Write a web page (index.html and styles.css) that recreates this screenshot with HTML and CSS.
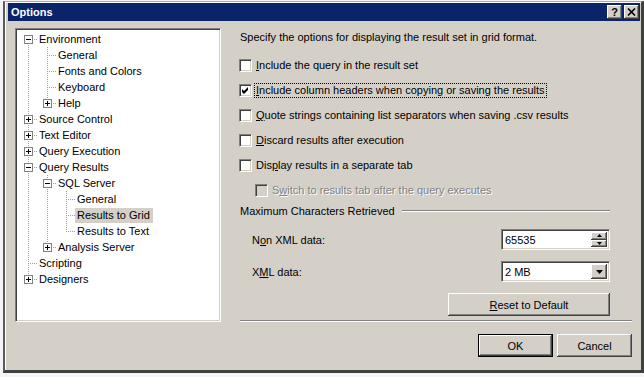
FILE: index.html
```html
<!DOCTYPE html>
<html>
<head>
<meta charset="utf-8">
<link rel="stylesheet" href="styles.css">
</head>
<body>
<div class="window">
  <div class="titlebar">
    <span class="title">Options</span>
    <div class="tb-buttons">
      <span class="tbtn help">?</span>
      <span class="tbtn"><svg width="9" height="8" viewBox="0 0 9 8"><path d="M1 0.5 L8 7.5 M8 0.5 L1 7.5" stroke="#000" stroke-width="1.6"/></svg></span>
    </div>
  </div>
  <div class="content">
    <div class="main">
      <div class="tree">
        <div class="node"><span class="c f"><svg class="exp" width="9" height="9" viewBox="0 0 9 9"><rect x="0.5" y="0.5" width="8" height="8" fill="#fff" stroke="#808080"/><path d="M2 4.5h5" stroke="#000"/></svg></span><span class="label">Environment</span></div>
        <div class="node"><span class="c v"></span><span class="c t"></span><span class="label">General</span></div>
        <div class="node"><span class="c v"></span><span class="c t"></span><span class="label">Fonts and Colors</span></div>
        <div class="node"><span class="c v"></span><span class="c t"></span><span class="label">Keyboard</span></div>
        <div class="node"><span class="c v"></span><span class="c l"><svg class="exp" width="9" height="9" viewBox="0 0 9 9"><rect x="0.5" y="0.5" width="8" height="8" fill="#fff" stroke="#808080"/><path d="M2 4.5h5M4.5 2v5" stroke="#000"/></svg></span><span class="label">Help</span></div>
        <div class="node"><span class="c t"><svg class="exp" width="9" height="9" viewBox="0 0 9 9"><rect x="0.5" y="0.5" width="8" height="8" fill="#fff" stroke="#808080"/><path d="M2 4.5h5M4.5 2v5" stroke="#000"/></svg></span><span class="label">Source Control</span></div>
        <div class="node"><span class="c t"><svg class="exp" width="9" height="9" viewBox="0 0 9 9"><rect x="0.5" y="0.5" width="8" height="8" fill="#fff" stroke="#808080"/><path d="M2 4.5h5M4.5 2v5" stroke="#000"/></svg></span><span class="label">Text Editor</span></div>
        <div class="node"><span class="c t"><svg class="exp" width="9" height="9" viewBox="0 0 9 9"><rect x="0.5" y="0.5" width="8" height="8" fill="#fff" stroke="#808080"/><path d="M2 4.5h5M4.5 2v5" stroke="#000"/></svg></span><span class="label">Query Execution</span></div>
        <div class="node"><span class="c t"><svg class="exp" width="9" height="9" viewBox="0 0 9 9"><rect x="0.5" y="0.5" width="8" height="8" fill="#fff" stroke="#808080"/><path d="M2 4.5h5" stroke="#000"/></svg></span><span class="label">Query Results</span></div>
        <div class="node"><span class="c v"></span><span class="c t"><svg class="exp" width="9" height="9" viewBox="0 0 9 9"><rect x="0.5" y="0.5" width="8" height="8" fill="#fff" stroke="#808080"/><path d="M2 4.5h5" stroke="#000"/></svg></span><span class="label">SQL Server</span></div>
        <div class="node"><span class="c v"></span><span class="c v"></span><span class="c t"></span><span class="label">General</span></div>
        <div class="node"><span class="c v"></span><span class="c v"></span><span class="c t"></span><span class="label selected">Results to Grid</span></div>
        <div class="node"><span class="c v"></span><span class="c v"></span><span class="c l"></span><span class="label">Results to Text</span></div>
        <div class="node"><span class="c v"></span><span class="c l"><svg class="exp" width="9" height="9" viewBox="0 0 9 9"><rect x="0.5" y="0.5" width="8" height="8" fill="#fff" stroke="#808080"/><path d="M2 4.5h5M4.5 2v5" stroke="#000"/></svg></span><span class="label">Analysis Server</span></div>
        <div class="node"><span class="c t"></span><span class="label">Scripting</span></div>
        <div class="node"><span class="c l"><svg class="exp" width="9" height="9" viewBox="0 0 9 9"><rect x="0.5" y="0.5" width="8" height="8" fill="#fff" stroke="#808080"/><path d="M2 4.5h5M4.5 2v5" stroke="#000"/></svg></span><span class="label">Designers</span></div>
      </div>
      <div class="panel">
        <div class="desc">Specify the options for displaying the result set in grid format.</div>
        <div class="checks">
          <div class="cb-row"><span class="cb"></span><span class="cb-label"><u>I</u>nclude the query in the result set</span></div>
          <div class="cb-row"><span class="cb"><svg width="9" height="9" viewBox="0 0 9 9"><path d="M1 3 L3 5 L7 1 V4 L3 8 L1 6 Z" fill="#000"/></svg></span><span class="cb-label focus"><u>I</u>nclude column headers when copying or saving the results</span></div>
          <div class="cb-row"><span class="cb"></span><span class="cb-label"><u>Q</u>uote strings containing list separators when saving .csv results</span></div>
          <div class="cb-row"><span class="cb"></span><span class="cb-label"><u>D</u>iscard results after execution</span></div>
          <div class="cb-row"><span class="cb"></span><span class="cb-label">Dis<u>p</u>lay results in a separate tab</span></div>
          <div class="cb-row sub"><span class="cb off"></span><span class="cb-label disabled">S<u>w</u>itch to results tab after the query executes</span></div>
        </div>
        <div class="group-head"><span>Maximum Characters Retrieved</span><span class="etch"></span></div>
        <div class="field-row first">
          <span>N<u>o</u>n XML data:</span>
          <div class="field">
            <span class="value">65535</span>
            <span class="spin">
              <span class="sbtn"><svg width="5" height="3" viewBox="0 0 5 3"><path d="M2.5 0 L5 3 H0 Z" fill="#000"/></svg></span>
              <span class="sbtn"><svg width="5" height="3" viewBox="0 0 5 3"><path d="M0 0 H5 L2.5 3 Z" fill="#000"/></svg></span>
            </span>
          </div>
        </div>
        <div class="field-row">
          <span>X<u>M</u>L data:</span>
          <div class="field">
            <span class="value">2 MB</span>
            <span class="dd"><svg width="7" height="4" viewBox="0 0 7 4"><path d="M0 0 H7 L3.5 4 Z" fill="#000"/></svg></span>
          </div>
        </div>
        <button class="btn reset"><u>R</u>eset to Default</button>
        <div class="sep"></div>
      </div>
    </div>
    <div class="buttons">
      <button class="btn default">OK</button>
      <button class="btn">Cancel</button>
    </div>
  </div>
</div>
</body>
</html>
```
FILE: styles.css
```css
html, body {
  margin: 0;
  padding: 0;
}
body {
  width: 644px;
  height: 377px;
  overflow: hidden;
  background: #f4f4f4;
  font-family: "Liberation Sans", Arial, sans-serif;
  font-size: 11px;
  color: #000;
}
.window {
  box-sizing: border-box;
  margin: 1px 0 0 3px;
  width: 641px;
  height: 372px;
  background: #d4d0c8;
  border-style: solid;
  border-width: 1px 3px 3px 2px;
  border-color: #a8a8a8 #404040 #404040 #5a5a5a;
  box-shadow: inset 1px 1px #fff;
  padding: 1px 1px 0 3px;
  display: flex;
  flex-direction: column;
}
.titlebar {
  height: 18px;
  flex: none;
  background: #0a246a;
  display: flex;
  align-items: center;
  justify-content: space-between;
  padding: 0 1px 0 3px;
}
.title {
  color: #fff;
  font-weight: bold;
  font-size: 11px;
}
.tb-buttons {
  display: flex;
  gap: 2px;
}
.tbtn {
  box-sizing: border-box;
  width: 15px;
  height: 14px;
  background: #d4d0c8;
  box-shadow: inset -1px -1px #404040, inset 1px 1px #fff, inset -2px -2px #808080;
  display: flex;
  align-items: center;
  justify-content: center;
  font-weight: bold;
  font-size: 11px;
  line-height: 14px;
}
.tbtn.help {
  padding-bottom: 1px;
}
.content {
  flex: 1;
  padding: 7px 8px 0 7px;
  display: flex;
  flex-direction: column;
}
.main {
  display: flex;
  height: 294px;
  gap: 19px;
}
.tree {
  box-sizing: border-box;
  width: 206px;
  height: 294px;
  background: #fff;
  border: 1px solid;
  border-color: #808080 #fff #fff #808080;
  box-shadow: inset 1px 1px #404040, inset -1px -1px #d4d0c8;
  padding: 2px 0 0 3px;
}
.node {
  display: flex;
  height: 16px;
  align-items: center;
  white-space: nowrap;
}
.c {
  flex: none;
  width: 19px;
  height: 16px;
  display: flex;
  align-items: center;
  justify-content: center;
  background-repeat: no-repeat;
}
.c .exp {
  display: block;
}
.v {
  background-image: repeating-linear-gradient(to bottom, #a0a0a0 0 1px, transparent 1px 2px);
  background-position: 9px 0;
  background-size: 1px 16px;
}
.t {
  background-image: repeating-linear-gradient(to bottom, #a0a0a0 0 1px, transparent 1px 2px), repeating-linear-gradient(to right, #a0a0a0 0 1px, transparent 1px 2px);
  background-position: 9px 0, 9px 8px;
  background-size: 1px 16px, 10px 1px;
}
.l {
  background-image: repeating-linear-gradient(to bottom, #a0a0a0 0 1px, transparent 1px 2px), repeating-linear-gradient(to right, #a0a0a0 0 1px, transparent 1px 2px);
  background-position: 9px 0, 9px 8px;
  background-size: 1px 9px, 10px 1px;
}
.f {
  background-image: repeating-linear-gradient(to bottom, #a0a0a0 0 1px, transparent 1px 2px), repeating-linear-gradient(to right, #a0a0a0 0 1px, transparent 1px 2px);
  background-position: 9px 8px, 9px 8px;
  background-size: 1px 8px, 10px 1px;
}
.label {
  margin-left: -1px;
  padding: 0 3px 0 2px;
  line-height: 15px;
}
.label.selected {
  background: #d4d0c8;
}
.panel {
  flex: 1;
  display: flex;
  flex-direction: column;
}
.desc {
  margin-top: 2px;
  line-height: 14px;
  white-space: nowrap;
}
.checks {
  margin-top: 9px;
}
.cb-row {
  height: 25px;
  display: flex;
  align-items: center;
  white-space: nowrap;
}
.cb-row.sub {
  padding-left: 16px;
}
.cb {
  box-sizing: border-box;
  flex: none;
  width: 13px;
  height: 13px;
  background: #fff;
  border: 1px solid;
  border-color: #808080 #fff #fff #808080;
  box-shadow: inset 1px 1px #404040, inset -1px -1px #d4d0c8;
  margin-left: -1px;
  margin-right: 4px;
  display: flex;
  align-items: center;
  justify-content: center;
}
.cb svg {
  display: block;
}
.cb.off {
  background: #d4d0c8;
}
.cb-label {
  line-height: 13px;
}
.cb-label.focus {
  border: 1px dotted #000;
  padding: 0 1px;
  margin-left: -2px;
}
.disabled {
  color: #808080;
  text-shadow: 1px 1px #fff;
}
.group-head {
  margin-top: 1px;
  height: 14px;
  display: flex;
  align-items: center;
  padding-right: 22px;
  white-space: nowrap;
}
.etch {
  flex: 1;
  height: 0;
  margin-left: 7px;
  border-top: 1px solid #808080;
  border-bottom: 1px solid #fff;
}
.field-row {
  margin-top: 11px;
  height: 21px;
  display: flex;
  align-items: center;
  justify-content: space-between;
  padding: 0 22px 0 12px;
}
.field {
  box-sizing: border-box;
  width: 109px;
  height: 21px;
  background: #fff;
  border: 1px solid;
  border-color: #808080 #fff #fff #808080;
  box-shadow: inset 1px 1px #404040, inset -1px -1px #d4d0c8;
  padding: 2px;
  display: flex;
  align-items: stretch;
}
.value {
  flex: 1;
  display: flex;
  align-items: center;
  padding-left: 1px;
}
.spin {
  width: 16px;
  display: flex;
  flex-direction: column;
}
.sbtn {
  flex: 1;
  background: #d4d0c8;
  box-shadow: inset -1px -1px #404040, inset 1px 1px #fff, inset -2px -2px #808080;
  display: flex;
  align-items: center;
  justify-content: center;
}
.sbtn svg, .dd svg {
  display: block;
}
.dd {
  width: 16px;
  background: #d4d0c8;
  box-shadow: inset -1px -1px #404040, inset 1px 1px #fff, inset -2px -2px #808080;
  display: flex;
  align-items: center;
  justify-content: center;
}
.btn {
  box-sizing: border-box;
  height: 23px;
  width: 75px;
  padding: 0;
  border: none;
  background: #d4d0c8;
  box-shadow: inset -1px -1px #404040, inset 1px 1px #fff, inset -2px -2px #808080;
  font-family: "Liberation Sans", Arial, sans-serif;
  font-size: 11px;
  color: #000;
}
.btn.reset {
  margin-top: 11px;
  align-self: flex-end;
  margin-right: 22px;
  width: 162px;
}
.btn.default {
  border: 1px solid #000;
  box-shadow: inset -1px -1px #404040, inset 1px 1px #fff, inset -2px -2px #808080;
}
.sep {
  margin-top: auto;
  border-top: 1px solid #808080;
  border-bottom: 1px solid #fff;
}
.buttons {
  display: flex;
  justify-content: flex-end;
  gap: 4px;
  margin-top: 12px;
}
```
